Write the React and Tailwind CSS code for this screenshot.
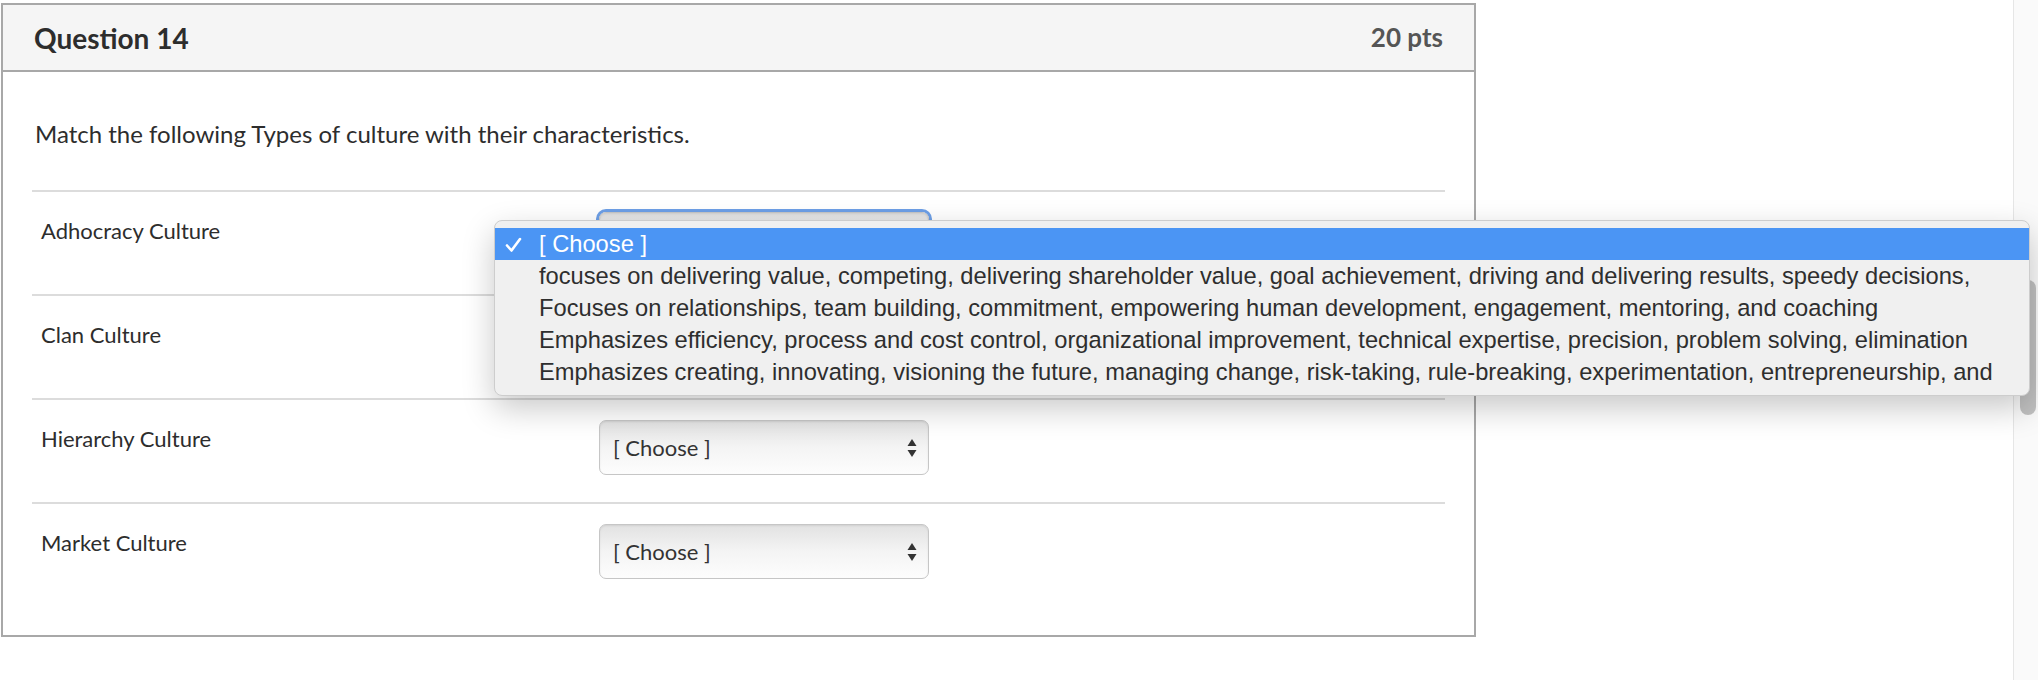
import React from "react";

const rows = [
    { label: "Adhocracy Culture", focused: true },
    { label: "Clan Culture" },
    { label: "Hierarchy Culture" },
    { label: "Market Culture" },
];

const options = [
    "focuses on delivering value, competing, delivering shareholder value, goal achievement, driving and delivering results, speedy decisions,",
    "Focuses on relationships, team building, commitment, empowering human development, engagement, mentoring, and coaching",
    "Emphasizes efficiency, process and cost control, organizational improvement, technical expertise, precision, problem solving, elimination",
    "Emphasizes creating, innovating, visioning the future, managing change, risk-taking, rule-breaking, experimentation, entrepreneurship, and",
];

function Arrows() {
    return (
        <svg width="10" height="20" viewBox="0 0 10 20" className="shrink-0">
            <path d="M5 1 L9.5 8 L0.5 8 Z" fill="#333" />
            <path d="M0.5 12 L9.5 12 L5 19 Z" fill="#333" />
        </svg>
    );
}

function Select({ focused }) {
    return (
        <div
            className={`w-[330px] h-[55px] rounded-[7px] border border-[#c6c6c6] bg-gradient-to-b from-[#e2e2e2] via-[#f4f4f4] to-[#fdfdfd] shadow-[inset_0_1px_2px_rgba(0,0,0,0.08)] flex items-center justify-between pl-[13px] pr-[11px] ${focused ? "ring-[3px] ring-[#6d9fe6]" : ""}`}
        >
            <span className="text-[22px] text-[#333]">[ Choose ]</span>
            <Arrows />
        </div>
    );
}

export default function App() {
    return (
        <div className="relative flex w-[2038px] h-[680px] bg-white overflow-hidden" style={{ fontFamily: "Lato, 'Open Sans', sans-serif" }}>
            <div className="flex-1 pt-[3px] pl-[1px]">
                <div className="w-[1475px] border-2 border-[#a8a8a8]">
                    {/* header */}
                    <div className="h-[67px] bg-[#f5f5f5] border-b-2 border-[#a8a8a8] flex items-center justify-between px-[31px]">
                        <h2 className="text-[28px] font-bold text-[#2d2d2d]">Question 14</h2>
                        <span className="text-[26px] font-bold text-[#555]">20 pts</span>
                    </div>

                    {/* body */}
                    <div className="px-[29px] pt-[48px] pb-[29px]">
                        <p className="text-[24px] leading-[28px] text-[#2d2d2d] mb-[42px] pl-[3px]">
                            Match the following Types of culture with their characteristics.
                        </p>
                        {rows.map(row => (
                            <div key={row.label} className="border-t-2 border-[#dcdcdc] flex pl-[9px] pt-[20px] h-[104px]">
                                <div className="w-[558px] pt-[5px] text-[22px] leading-[28px] text-[#2d2d2d]">{row.label}</div>
                                <Select focused={row.focused} />
                            </div>
                        ))}
                    </div>
                </div>
            </div>

            {/* page scrollbar */}
            <div className="w-[25px] h-full bg-[#fafafa] border-l border-[#e6e6e6] pt-[280px] pl-[6px]">
                <div className="w-[16px] h-[135px] rounded-full bg-[#c1c1c1]" />
            </div>

            {/* open native menu */}
            <div
                className="absolute left-[494px] top-[220px] w-[1536px] rounded-[8px] border border-[#cdcdcd] bg-[#f0f0f0] py-[7px] shadow-[0_12px_32px_rgba(0,0,0,0.22)]"
                style={{ fontFamily: "'Liberation Sans', Arial, sans-serif" }}
            >
                <div className="h-[32px] bg-[#4b95f4] flex items-center pt-[2px] text-white text-[23.7px]">
                    <svg width="44" height="30" viewBox="0 0 44 30" className="shrink-0">
                        <path d="M12 15.5 L16.5 20.5 L25 9" fill="none" stroke="white" strokeWidth="2.6" strokeLinecap="round" strokeLinejoin="round" />
                    </svg>
                    <span>[ Choose ]</span>
                </div>
                {options.map(opt => (
                    <div key={opt} className="h-[32px] flex items-center pt-[2px] pl-[44px] text-[23.7px] text-[#2e2e2e] whitespace-nowrap">
                        {opt}
                    </div>
                ))}
            </div>
        </div>
    );
}
